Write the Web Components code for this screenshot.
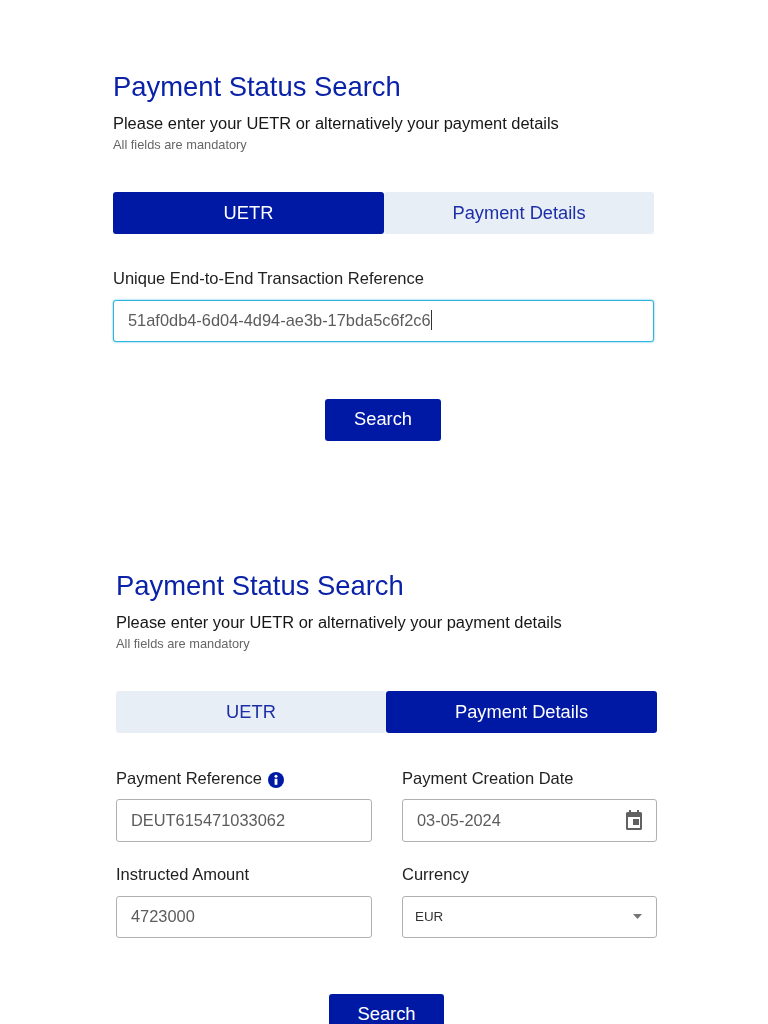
<!DOCTYPE html>
<html lang="en">
<head>
<meta charset="utf-8">
<title>Payment Status Search</title>
<style>
  html, body { margin: 0; height: 1024px; overflow: hidden; background: #fff; }
  body { font-family: "Liberation Sans", Arial, sans-serif; }
  ps-panel { filter: blur(0.35px); }
  #first { margin-left: 113px; padding-top: 70px; --split: 271px; --tabs-gap: 35px; --btn-width: 116px; --btn-nudge: 1px; }
  #second { margin-left: 116px; margin-top: 128px; --split: 270px; --tabs-gap: 35.5px; --btn-width: 115px; --btn-nudge: 0px; }
</style>
</head>
<body>
<ps-panel id="first" active="uetr" gap="57">
  <ps-field label="Unique End-to-End Transaction Reference">
    <ps-input focused caret>51af0db4-6d04-4d94-ae3b-17bda5c6f2c6</ps-input>
  </ps-field>
</ps-panel>

<ps-panel id="second" active="details" gap="56">
  <ps-grid>
    <ps-field label="Payment Reference" info>
      <ps-input>DEUT615471033062</ps-input>
    </ps-field>
    <ps-field label="Payment Creation Date">
      <ps-input icon="calendar">03-05-2024</ps-input>
    </ps-field>
    <ps-field label="Instructed Amount">
      <ps-input>4723000</ps-input>
    </ps-field>
    <ps-field label="Currency">
      <ps-input icon="caret" small>EUR</ps-input>
    </ps-field>
  </ps-grid>
</ps-panel>

<script>
/** Panel: heading, tabs, whatever form it is given, search button */

class PsPanel extends HTMLElement {
  constructor() {
    super();
    const active = this.getAttribute("active");
    const gap = this.getAttribute("gap");
    this.attachShadow({ mode: "open" }).innerHTML = `
<style>
  :host { display: block; width: 541px; }
  h1 { margin: 0; font-size: 27.4px; line-height: 34px; font-weight: 400; color: #0a22a8; }
  p { margin: 9px 0 0; font-size: 16.45px; line-height: 20px; color: #161616; }
  small { display: block; margin-top: 4px; font-size: 12.8px; line-height: 16px; color: #666; }
  .tabs { display: grid; grid-template-columns: var(--split) 1fr; height: 42px; margin: 39px 0 var(--tabs-gap); }
  .tab { display: flex; align-items: center; justify-content: center; padding-bottom: 1px; font-size: 18.3px;
    background: #e8eef6; color: #1c2fa6; border-radius: 3px; }
  .tab.on { background: #0019a5; color: #fff; }
  .actions { display: flex; justify-content: center; margin-top: ${gap}px; }
  button { width: var(--btn-width); height: 42px; padding: 0 0 2px; margin-right: var(--btn-nudge); border: 0; border-radius: 3px;
    background: #0019a5; color: #fff; font: 18.3px "Liberation Sans", Arial, sans-serif; }
</style>
<h1>Payment Status Search</h1>
<p>Please enter your UETR or alternatively your payment details</p>
<small>All fields are mandatory</small>
<div class="tabs">
  <div class="tab ${active === "uetr" ? "on" : ""}">UETR</div>
  <div class="tab ${active === "details" ? "on" : ""}">Payment Details</div>
</div>
<slot></slot>
<div class="actions"><button type="button">Search</button></div>
`;
  }
}

class PsGrid extends HTMLElement {
  constructor() {
    super();
    this.attachShadow({ mode: "open" }).innerHTML = `
<style>
  :host { display: grid; grid-template-columns: 256px 255px; column-gap: 30px; row-gap: 23.5px; }
</style>
<slot></slot>
`;
  }
}

class PsField extends HTMLElement {
  constructor() {
    super();
    const info = this.hasAttribute("info")
      ? `<svg width="16" height="16" viewBox="0 0 16 16"><circle cx="8" cy="8" r="8" fill="#0019a5"/><rect x="6.6" y="6.8" width="2.8" height="6" fill="#fff"/><circle cx="8" cy="4.3" r="1.5" fill="#fff"/></svg>`
      : "";
    this.attachShadow({ mode: "open" }).innerHTML = `
<style>
  :host { display: block; }
  label { display: flex; align-items: center; gap: 6px; box-sizing: border-box; height: 20px; padding-bottom: 2px; margin-bottom: 10.5px;
    font-size: 16.5px; line-height: 18px; color: #222; }
  svg { margin-top: 4px; }
</style>
<label>${this.getAttribute("label")}${info}</label>
<slot></slot>
`;
  }
}

const ICONS = {
  calendar: `<svg width="16" height="20" viewBox="0 0 16 20" fill="#616161"><path fill-rule="evenodd" d="M3 0h2v2h6V0h2v2h1.5A1.5 1.5 0 0 1 16 3.5v15a1.5 1.5 0 0 1-1.5 1.5h-13A1.5 1.5 0 0 1 0 18.5v-15A1.5 1.5 0 0 1 1.5 2H3zM2 7v11h12V7z"/><rect x="7" y="9" width="6" height="6"/></svg>`,
  caret: `<svg width="9" height="5" viewBox="0 0 9 5" fill="#757575"><path d="M0 0h9L4.5 5z"/></svg>`
};

class PsInput extends HTMLElement {
  constructor() {
    super();
    const icon = ICONS[this.getAttribute("icon")] || "";
    this.attachShadow({ mode: "open" }).innerHTML = `
<style>
  :host { display: flex; align-items: center; justify-content: space-between; box-sizing: border-box;
    height: 42.5px; padding: 0 14px 1px 14px; background: #fff; border: 1px solid #b0b0b0; border-radius: 3px;
    font-size: 16.4px; color: #5c5c5c; }
  :host([focused]) { border-color: #2fb4e0; box-shadow: 0 0 2px #35b3dc; }
  :host([small]) { padding-left: 12px; padding-bottom: 0; font-size: 13.4px; color: #333; }
  :host([caret]) .text { border-right: 1px solid #333; }
  .text { line-height: 20px; }
  svg { display: block; }
</style>
<span class="text"><slot></slot></span>${icon}
`;
  }
}

customElements.define("ps-panel", PsPanel);
customElements.define("ps-grid", PsGrid);
customElements.define("ps-field", PsField);
customElements.define("ps-input", PsInput);
</script>
</body>
</html>
